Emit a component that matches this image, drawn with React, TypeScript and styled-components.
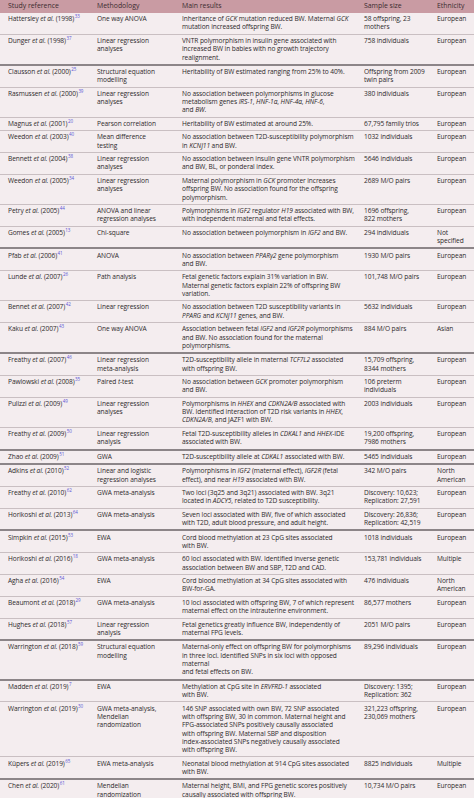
import React from "react";
import styled, { createGlobalStyle } from "styled-components";

const GlobalStyle = createGlobalStyle`
  html, body {
    margin: 0;
    padding: 0;
    background: #f4edef;
  }
  body {
    font-family: "Open Sans", "Noto Sans", Arial, sans-serif;
    color: #2e2a2b;
  }
`;

const Table = styled.div`
  width: 474px;
  display: grid;
  grid-template-columns: 92px 85px 182px 73px 42px;
  background: #f4edef;
  font-size: 6.6px;
  line-height: 8.3px;
  letter-spacing: -0.08px;
`;

const HeadCell = styled.div<{ $first?: boolean }>`
  background: #c99ba3;
  height: 13px;
  display: flex;
  align-items: center;
  padding-left: ${(p) => (p.$first ? "8px" : "5px")};
  font-size: 6.9px;
  letter-spacing: 0;
  color: #3b2b2f;
`;

const Cell = styled.div<{ $first?: boolean; $thick?: boolean }>`
  padding: 2.2px 0 2px ${(p) => (p.$first ? "8px" : "5px")};
  border-bottom: ${(p) => (p.$thick ? "2px solid #8c8588" : "1px solid #c9bfc2")};
  white-space: nowrap;
`;

const I = styled.i`
  font-style: italic;
`;

const Sup = styled.sup`
  font-size: 4.5px;
  line-height: 0;
  color: #5a55d6;
  vertical-align: 3px;
  margin-left: 0.5px;
`;

type Row = {
  ref: React.ReactNode;
  method: React.ReactNode;
  result: React.ReactNode;
  sample: React.ReactNode;
  eth: React.ReactNode;
  thick?: boolean;
};

const Ref = ({ name, year, n }: { name: string; year: string; n: string }) => (
  <>
    {name} <I>et al.</I> ({year})<Sup>{n}</Sup>
  </>
);

const rows: Row[] = [
  {
    ref: <Ref name="Hattersley" year="1998" n="33" />,
    method: "One way ANOVA",
    result: (
      <>
        Inheritance of <I>GCK</I> mutation reduced BW. Maternal <I>GCK</I>
        <br />
        mutation increased offspring BW.
      </>
    ),
    sample: (
      <>
        58 offspring, 23
        <br />
        mothers
      </>
    ),
    eth: "European",
  },
  {
    ref: <Ref name="Dunger" year="1998" n="37" />,
    method: (
      <>
        Linear regression
        <br />
        analyses
      </>
    ),
    result: (
      <>
        VNTR polymorphism in insulin gene associated with
        <br />
        increased BW in babies with no growth trajectory
        <br />
        realignment.
      </>
    ),
    sample: "758 individuals",
    eth: "European",
    thick: true,
  },
  {
    ref: <Ref name="Clausson" year="2000" n="25" />,
    method: (
      <>
        Structural equation
        <br />
        modelling
      </>
    ),
    result: "Heritability of BW estimated ranging from 25% to 40%.",
    sample: (
      <>
        Offspring from 2009
        <br />
        twin pairs
      </>
    ),
    eth: "European",
  },
  {
    ref: <Ref name="Rasmussen" year="2000" n="39" />,
    method: (
      <>
        Linear regression
        <br />
        analyses
      </>
    ),
    result: (
      <>
        No association between polymorphisms in glucose
        <br />
        metabolism genes <I>IRS-1</I>, <I>HNF-1α</I>, <I>HNF-4α</I>, <I>HNF-6</I>,
        <br />
        and <I>BW</I>.
      </>
    ),
    sample: "380 individuals",
    eth: "European",
  },
  {
    ref: <Ref name="Magnus" year="2001" n="20" />,
    method: "Pearson correlation",
    result: "Heritability of BW estimated at around 25%.",
    sample: "67,795 family trios",
    eth: "European",
  },
  {
    ref: <Ref name="Weedon" year="2003" n="40" />,
    method: (
      <>
        Mean difference
        <br />
        testing
      </>
    ),
    result: (
      <>
        No association between T2D-susceptibility polymorphism
        <br />
        in <I>KCNJ11</I> and BW.
      </>
    ),
    sample: "1032 individuals",
    eth: "European",
  },
  {
    ref: <Ref name="Bennett" year="2004" n="38" />,
    method: (
      <>
        Linear regression
        <br />
        analyses
      </>
    ),
    result: (
      <>
        No association between insulin gene VNTR polymorphism
        <br />
        and BW, BL, or ponderal index.
      </>
    ),
    sample: "5646 individuals",
    eth: "European",
  },
  {
    ref: <Ref name="Weedon" year="2005" n="34" />,
    method: (
      <>
        Linear regression
        <br />
        analyses
      </>
    ),
    result: (
      <>
        Maternal polymorphism in <I>GCK</I> promoter increases
        <br />
        offspring BW. No association found for the offspring
        <br />
        polymorphism.
      </>
    ),
    sample: "2689 M/O pairs",
    eth: "European",
  },
  {
    ref: <Ref name="Petry" year="2005" n="44" />,
    method: (
      <>
        ANOVA and linear
        <br />
        regression analyses
      </>
    ),
    result: (
      <>
        Polymorphisms in <I>IGF2</I> regulator <I>H19</I> associated with BW,
        <br />
        with independent maternal and fetal effects.
      </>
    ),
    sample: (
      <>
        1696 offspring,
        <br />
        822 mothers
      </>
    ),
    eth: "European",
  },
  {
    ref: <Ref name="Gomes" year="2005" n="13" />,
    method: "Chi-square",
    result: (
      <>
        No association between polymorphism in <I>IGF2</I> and BW.
      </>
    ),
    sample: "294 individuals",
    eth: (
      <>
        Not
        <br />
        specified
      </>
    ),
    thick: true,
  },
  {
    ref: <Ref name="Pfab" year="2006" n="41" />,
    method: "ANOVA",
    result: (
      <>
        No association between <I>PPARγ2</I> gene polymorphism
        <br />
        and BW.
      </>
    ),
    sample: "1930 M/O pairs",
    eth: "European",
  },
  {
    ref: <Ref name="Lunde" year="2007" n="26" />,
    method: "Path analysis",
    result: (
      <>
        Fetal genetic factors explain 31% variation in BW.
        <br />
        Maternal genetic factors explain 22% of offspring BW
        <br />
        variation.
      </>
    ),
    sample: "101,748 M/O pairs",
    eth: "European",
  },
  {
    ref: <Ref name="Bennet" year="2007" n="42" />,
    method: "Linear regression",
    result: (
      <>
        No association between T2D susceptibility variants in
        <br />
        <I>PPARG</I> and <I>KCNJ11</I> genes, and BW.
      </>
    ),
    sample: "5632 individuals",
    eth: "European",
  },
  {
    ref: <Ref name="Kaku" year="2007" n="43" />,
    method: "One way ANOVA",
    result: (
      <>
        Association between fetal <I>IGF2</I> and <I>IGF2R</I> polymorphisms
        <br />
        and BW. No association found for the maternal
        <br />
        polymorphisms.
      </>
    ),
    sample: "884 M/O pairs",
    eth: "Asian",
    thick: true,
  },
  {
    ref: <Ref name="Freathy" year="2007" n="46" />,
    method: (
      <>
        Linear regression
        <br />
        meta-analysis
      </>
    ),
    result: (
      <>
        T2D-susceptibility allele in maternal <I>TCF7L2</I> associated
        <br />
        with offspring BW.
      </>
    ),
    sample: (
      <>
        15,709 offspring,
        <br />
        8344 mothers
      </>
    ),
    eth: "European",
  },
  {
    ref: <Ref name="Pawlowski" year="2008" n="35" />,
    method: (
      <>
        Paired <I>t</I>-test
      </>
    ),
    result: (
      <>
        No association between <I>GCK</I> promoter polymorphism
        <br />
        and BW.
      </>
    ),
    sample: (
      <>
        106 preterm
        <br />
        individuals
      </>
    ),
    eth: "European",
  },
  {
    ref: <Ref name="Pulizzi" year="2009" n="49" />,
    method: (
      <>
        Linear regression
        <br />
        analyses
      </>
    ),
    result: (
      <>
        Polymorphisms in <I>HHEX</I> and <I>CDKN2A/B</I> associated with
        <br />
        BW. Identified interaction of T2D risk variants in <I>HHEX</I>,
        <br />
        <I>CDKN2A/B</I>, and JAZF1 with BW.
      </>
    ),
    sample: "2003 individuals",
    eth: "European",
  },
  {
    ref: <Ref name="Freathy" year="2009" n="50" />,
    method: (
      <>
        Linear regression
        <br />
        analysis
      </>
    ),
    result: (
      <>
        Fetal T2D-susceptibility alleles in <I>CDKAL1</I> and <I>HHEX</I>-IDE
        <br />
        associated with BW.
      </>
    ),
    sample: (
      <>
        19,200 offspring,
        <br />
        7986 mothers
      </>
    ),
    eth: "European",
    thick: true,
  },
  {
    ref: <Ref name="Zhao" year="2009" n="51" />,
    method: "GWA",
    result: (
      <>
        T2D-susceptibility allele at <I>CDKAL1</I> associated with BW.
      </>
    ),
    sample: "5465 individuals",
    eth: "European",
    thick: true,
  },
  {
    ref: <Ref name="Adkins" year="2010" n="52" />,
    method: (
      <>
        Linear and logistic
        <br />
        regression analyses
      </>
    ),
    result: (
      <>
        Polymorphisms in <I>IGF2</I> (maternal effect), <I>IGF2R</I> (fetal
        <br />
        effect), and near <I>H19</I> associated with BW.
      </>
    ),
    sample: "342 M/O pairs",
    eth: (
      <>
        North
        <br />
        American
      </>
    ),
  },
  {
    ref: <Ref name="Freathy" year="2010" n="62" />,
    method: "GWA meta-analysis",
    result: (
      <>
        Two loci (3q25 and 3q21) associated with BW. 3q21
        <br />
        located in <I>ADCY5</I>, related to T2D susceptibility.
      </>
    ),
    sample: (
      <>
        Discovery: 10,623;
        <br />
        Replication: 27,591
      </>
    ),
    eth: "European",
  },
  {
    ref: <Ref name="Horikoshi" year="2013" n="64" />,
    method: "GWA meta-analysis",
    result: (
      <>
        Seven loci associated with BW, five of which associated
        <br />
        with T2D, adult blood pressure, and adult height.
      </>
    ),
    sample: (
      <>
        Discovery: 26,836;
        <br />
        Replication: 42,519
      </>
    ),
    eth: "European",
    thick: true,
  },
  {
    ref: <Ref name="Simpkin" year="2015" n="53" />,
    method: "EWA",
    result: (
      <>
        Cord blood methylation at 23 CpG sites associated
        <br />
        with BW.
      </>
    ),
    sample: "1018 individuals",
    eth: "European",
  },
  {
    ref: <Ref name="Horikoshi" year="2016" n="18" />,
    method: "GWA meta-analysis",
    result: (
      <>
        60 loci associated with BW. Identified inverse genetic
        <br />
        association between BW and SBP, T2D and CAD.
      </>
    ),
    sample: "153,781 individuals",
    eth: "Multiple",
  },
  {
    ref: <Ref name="Agha" year="2016" n="54" />,
    method: "EWA",
    result: (
      <>
        Cord blood methylation at 34 CpG sites associated with
        <br />
        BW-for-GA.
      </>
    ),
    sample: "476 individuals",
    eth: (
      <>
        North
        <br />
        American
      </>
    ),
  },
  {
    ref: <Ref name="Beaumont" year="2018" n="29" />,
    method: "GWA meta-analysis",
    result: (
      <>
        10 loci associated with offspring BW, 7 of which represent
        <br />
        maternal effect on the intrauterine environment.
      </>
    ),
    sample: "86,577 mothers",
    eth: "European",
  },
  {
    ref: <Ref name="Hughes" year="2018" n="57" />,
    method: (
      <>
        Linear regression
        <br />
        analysis
      </>
    ),
    result: (
      <>
        Fetal genetics greatly influence BW, independently of
        <br />
        maternal FPG levels.
      </>
    ),
    sample: "2051 M/O pairs",
    eth: "European",
    thick: true,
  },
  {
    ref: <Ref name="Warrington" year="2018" n="59" />,
    method: (
      <>
        Structural equation
        <br />
        modelling
      </>
    ),
    result: (
      <>
        Maternal-only effect on offspring BW for polymorphisms
        <br />
        in three loci. Identified SNPs in six loci with opposed
        <br />
        maternal
        <br />
        and fetal effects on BW.
      </>
    ),
    sample: "89,296 individuals",
    eth: "European",
    thick: true,
  },
  {
    ref: <Ref name="Madden" year="2019" n="7" />,
    method: "EWA",
    result: (
      <>
        Methylation at CpG site in <I>ERVFRD-1</I> associated
        <br />
        with BW.
      </>
    ),
    sample: (
      <>
        Discovery: 1395;
        <br />
        Replication: 362
      </>
    ),
    eth: "European",
  },
  {
    ref: <Ref name="Warrington" year="2019" n="30" />,
    method: (
      <>
        GWA meta-analysis,
        <br />
        Mendelian
        <br />
        randomization
      </>
    ),
    result: (
      <>
        146 SNP associated with own BW, 72 SNP associated
        <br />
        with offspring BW, 30 in common. Maternal height and
        <br />
        FPG-associated SNPs positively causally associated
        <br />
        with offspring BW. Maternal SBP and disposition
        <br />
        index-associated SNPs negatively causally associated
        <br />
        with offspring BW.
      </>
    ),
    sample: (
      <>
        321,223 offspring,
        <br />
        230,069 mothers
      </>
    ),
    eth: "European",
  },
  {
    ref: <Ref name="Küpers" year="2019" n="65" />,
    method: "EWA meta-analysis",
    result: (
      <>
        Neonatal blood methylation at 914 CpG sites associated
        <br />
        with BW.
      </>
    ),
    sample: "8825 individuals",
    eth: "Multiple",
    thick: true,
  },
  {
    ref: <Ref name="Chen" year="2020" n="61" />,
    method: (
      <>
        Mendelian
        <br />
        randomization
      </>
    ),
    result: (
      <>
        Maternal height, BMI, and FPG genetic scores positively
        <br />
        causally associated with offspring BW.
      </>
    ),
    sample: "10,734 M/O pairs",
    eth: "European",
  },
];

const headers = ["Study reference", "Methodology", "Main results", "Sample size", "Ethnicity"];

export default function App() {
  return (
    <>
      <GlobalStyle />
      <Table>
        {headers.map((h, i) => (
          <HeadCell key={h} $first={i === 0}>
            {h}
          </HeadCell>
        ))}
        {rows.map((r, i) => (
          <React.Fragment key={i}>
            <Cell $first $thick={r.thick}>
              {r.ref}
            </Cell>
            <Cell $thick={r.thick}>{r.method}</Cell>
            <Cell $thick={r.thick}>{r.result}</Cell>
            <Cell $thick={r.thick}>{r.sample}</Cell>
            <Cell $thick={r.thick}>{r.eth}</Cell>
          </React.Fragment>
        ))}
      </Table>
    </>
  );
}
